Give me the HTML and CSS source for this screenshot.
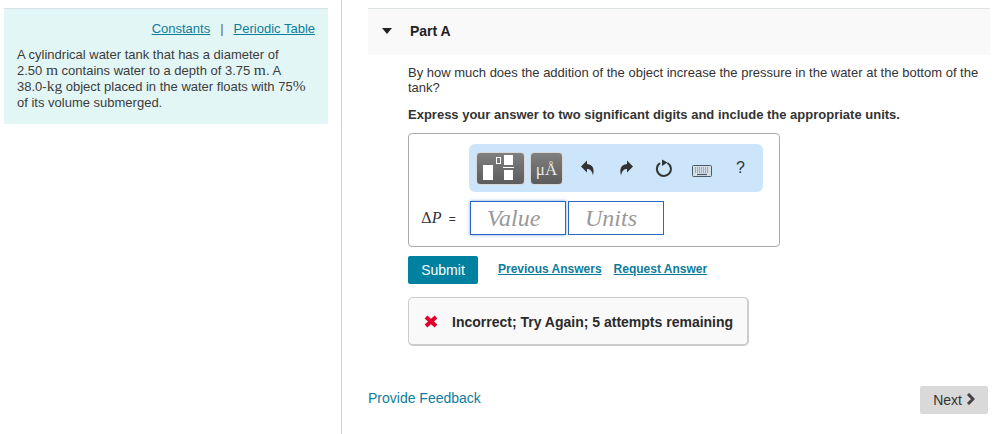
FILE: index.html
```html
<!DOCTYPE html>
<html lang="en">
<head>
<meta charset="utf-8">
<title>Part A</title>
<link rel="stylesheet" href="styles.css">
</head>
<body>
<div class="page">
  <aside class="side">
    <div class="panel">
      <div class="panel-links"><a href="#">Constants</a><span class="sep">|</span><a href="#">Periodic Table</a></div>
      <p class="panel-text">A cylindrical water tank that has a diameter of<br>2.50 <span class="math">m</span> contains water to a depth of 3.75 <span class="math">m</span>. A<br>38.0-<span class="math">kg</span> object placed in the water floats with 75<span class="math">%</span><br>of its volume submerged.</p>
    </div>
  </aside>
  <main class="main">
    <div class="part-head">
      <svg class="caret" width="10" height="6" viewBox="0 0 10 6"><path d="M0 0H10L5 6Z" fill="#222"/></svg>
      <span>Part A</span>
    </div>
    <div class="part-body">
      <p class="question">By how much does the addition of the object increase the pressure in the water at the bottom of the tank?</p>
      <p class="instruction">Express your answer to two significant digits and include the appropriate units.</p>
      <div class="answer">
        <div class="toolbar">
          <div class="tool tool-templates">
            <svg width="49" height="33" viewBox="0 0 49 33">
              <rect x="7" y="13" width="10" height="15" fill="#fff"/>
              <rect x="20.5" y="5.500" width="4" height="6" fill="none" stroke="#fff"/>
              <rect x="28" y="3" width="9" height="10" fill="#fff"/>
              <rect x="27" y="15" width="11" height="1" fill="#fff"/>
              <rect x="28" y="18" width="9" height="10" fill="#fff"/>
            </svg>
          </div>
          <div class="tool tool-units">μÅ</div>
          <div class="actions">
            <svg class="act-undo" width="15" height="16" viewBox="0 0 15 16"><path d="M7 .5 1 6.500l6 6V9c3 0 5 1.500 6 6.500 1.500-6 .5-11-6-11.500z" fill="#333"/></svg>
            <svg class="act-redo" width="15" height="16" viewBox="0 0 15 16"><path d="M8 .5l6 6-6 6V9c-3 0-5 1.500-6 6.500-1.500-6-.5-11 6-11.500z" fill="#333"/></svg>
            <svg class="act-reset" width="18" height="20" viewBox="0 0 18 20"><path d="M13.500 5A7 7 0 1 1 6 5.200" fill="none" stroke="#333" stroke-width="2"/><path d="M8 1.500 13.500 4.500 8 8z" fill="#333"/></svg>
            <svg class="act-keys" width="20" height="12" viewBox="0 0 20 12"><rect x=".5" y=".5" width="19" height="11" rx="1" fill="#d5dfe8" stroke="#4c5a66"/><path d="M3 3h14M3 5h14M3 7h14" stroke="#66727c" stroke-dasharray="1 1"/><path d="M5 9.500h10" stroke="#4c5a66" stroke-width="1.200"/></svg>
            <span class="act-help">?</span>
          </div>
        </div>
        <div class="entry">
          <span class="entry-label"><span class="delta">Δ</span><i class="math-it">P</i><span class="equals">=</span></span>
          <span class="field field-focus">Value</span>
          <span class="field">Units</span>
        </div>
      </div>
      <div class="actions-row">
        <button class="submit" type="button">Submit</button>
        <a class="act-link" href="#">Previous Answers</a>
        <a class="act-link" href="#">Request Answer</a>
      </div>
      <div class="feedback">
        <svg width="14" height="13" viewBox="0 0 14 13"><path d="M2 2 12 11M12 2 2 11" stroke="#e0002b" stroke-width="4"/></svg>
        <span>Incorrect; Try Again; 5 attempts remaining</span>
      </div>
    </div>
    <div class="footer">
      <a class="provide" href="#">Provide Feedback</a>
      <button class="next" type="button">Next
        <svg width="9" height="12" viewBox="0 0 9 12"><path d="M2 1l5 5-5 5" fill="none" stroke="#444" stroke-width="3"/></svg>
      </button>
    </div>
  </main>
</div>
</body>
</html>
```
FILE: styles.css
```css
* { box-sizing: border-box; }
html, body { margin: 0; padding: 0; }
body {
  width: 1007px;
  height: 434px;
  overflow: hidden;
  background: #fff;
  color: #333;
  font-family: "Liberation Sans", Arial, sans-serif;
  font-size: 13px;
}
p { margin: 0; }
a { color: #0e7c9b; }
.page { display: flex; height: 434px; }
.side {
  width: 342px;
  flex: none;
  padding: 8px 13px 0 4px;
  border-right: 1px solid #c6d2dc;
}
.panel {
  height: 116px;
  padding: 13px 13px 0 13px;
  background: #e3f6f6;
  border-top: 1px solid #d8e2e6;
}
.panel-links { text-align: right; font-size: 13px; line-height: 14px; }
.sep { margin: 0 10px; color: #666; }
.panel-text { margin-top: 11px; line-height: 16px; font-size: 13px; color: #3c3c3c; }
.math { font-family: "Liberation Serif", serif; font-size: 15.500px; line-height: 14px; }
.main { width: 622px; margin-left: 26px; flex: none; }
.part-head {
  display: flex;
  align-items: center;
  height: 47px;
  margin-top: 8px;
  padding-left: 14px;
  padding-bottom: 2px;
  gap: 18px;
  background: #f9f9f9;
  border-top: 1px solid #dde2e5;
  font-size: 14px;
  font-weight: bold;
  color: #222;
}
.part-body { padding-left: 40px; }
.question { margin-top: 10px; line-height: 15px; }
.instruction { margin-top: 12px; line-height: 15px; font-weight: bold; }
.answer {
  width: 372px;
  height: 114px;
  margin-top: 11px;
  padding: 10px 16px 0 60px;
  border: 1px solid #aaa;
  border-radius: 4px;
}
.toolbar {
  display: flex;
  align-items: center;
  height: 48px;
  padding-left: 7px;
  background: #cce5fb;
  border-radius: 6px;
}
.tool {
  height: 33px;
  border-radius: 4px;
  background: linear-gradient(#7f7f7f, #5c5c5c);
  border: 1px solid #d8d8d8;
  color: #e8e8e8;
}
.tool-templates { width: 49px; }
.tool-templates svg { display: block; margin: -1px; }
.tool-units {
  width: 33px;
  margin-left: 5px;
  font-family: "Liberation Serif", serif;
  font-size: 17px;
  line-height: 33px;
  text-align: center;
}
.actions { display: flex; align-items: center; margin-left: 17px; }
.act-undo { margin-right: 24px; }
.act-redo { margin-right: 20px; }
.act-reset { margin-right: 20px; }
.act-keys { margin-right: 24px; margin-top: 6px; }
.act-help { font-size: 16px; color: #333; }
.entry { display: flex; align-items: center; margin-top: 9px; height: 34px; }
.entry-label { flex: none; width: 49px; margin-left: -48px; white-space: nowrap; }
.delta { font-family: "DejaVu Serif", serif; font-size: 15px; }
.math-it { font-family: "Liberation Serif", serif; font-size: 16px; }
.equals { margin-left: 7px; font-size: 12px; }
.field {
  width: 96px;
  height: 34px;
  margin-left: 2px;
  padding-left: 16px;
  border: 1px solid #2b66c0;
  font-family: "Liberation Serif", serif;
  font-style: italic;
  font-size: 24px;
  line-height: 32px;
  color: #999;
}
.field-focus {
  margin-left: 0;
  border-width: 1.500px;
  box-shadow: 0 0 3px #6d9fe0;
}
.actions-row { display: flex; align-items: center; margin-top: 9px; height: 28px; }
.submit {
  width: 70px;
  height: 28px;
  padding: 0;
  border: 0;
  border-radius: 2px;
  background: #00819f;
  color: #fff;
  font: 14px "Liberation Sans", Arial, sans-serif;
}
.act-link { margin-left: 12px; margin-top: -3px; font-size: 12px; font-weight: bold; }
.submit + .act-link { margin-left: 20px; }
.feedback {
  display: flex;
  align-items: center;
  gap: 14px;
  width: 341px;
  height: 49px;
  margin-top: 13px;
  padding: 1px 0 0 15px;
  background: #f9f9f9;
  border: 1px solid #ccc;
  border-right-width: 2px;
  border-bottom-width: 2px;
  border-radius: 5px;
  font-size: 14px;
  font-weight: bold;
  color: #2a2a2a;
}
.footer {
  display: flex;
  justify-content: space-between;
  align-items: center;
  width: 620px;
  margin-top: 40px;
  height: 28px;
}
.provide { margin-top: -4px; text-decoration: none; font-size: 14px; }
.next {
  width: 68px;
  height: 28px;
  padding: 0;
  border: 0;
  border-radius: 2px;
  background: #d9d9d9;
  color: #333;
  font: 14px "Liberation Sans", Arial, sans-serif;
}
```
